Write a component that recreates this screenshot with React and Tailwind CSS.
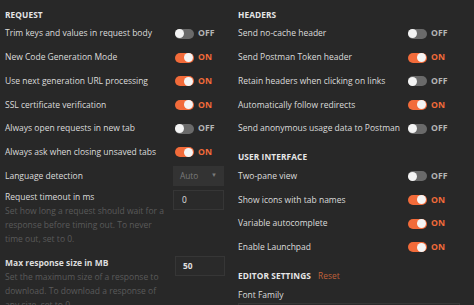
import React from "react";

const font = { fontFamily: '"Open Sans", "Noto Sans", sans-serif' };

function Toggle({ on }) {
  return (
    <div className="flex items-center gap-[4px]">
      <div
        className={
          "relative h-[10px] w-[19px] rounded-full " +
          (on ? "bg-[#f26b3a]" : "bg-[#6a6a6a]")
        }
      >
        <div
          className={
            "absolute top-[0.5px] h-[9px] w-[9px] rounded-full bg-[#f4f4f4] " +
            (on ? "right-[1px]" : "left-[0px]")
          }
        />
      </div>
      <span
        className={
          "text-[8.7px] font-bold leading-none " +
          (on ? "text-[#f26b3a]" : "text-[#b5b5b5]")
        }
      >
        {on ? "ON" : "OFF"}
      </span>
    </div>
  );
}

function Row({ label, on }) {
  return (
    <div className="flex h-[23.7px] items-center">
      <div className="w-[170px] shrink-0 whitespace-nowrap text-[8.5px] text-[#dcdcdc]">{label}</div>
      <Toggle on={on} />
    </div>
  );
}

function Header({ children, extra }) {
  return (
    <div className="flex h-[12px] items-center gap-[7px] text-[8.3px] font-bold tracking-[0.1px] text-[#e6e6e6]">
      {children}
      {extra}
    </div>
  );
}

export default function App() {
  return (
    <div
      className="flex h-[305px] w-[474px] overflow-hidden bg-[#282828] pl-[5px]"
      style={font}
    >
      {/* Left column */}
      <div className="flex w-[233px] shrink-0 flex-col">
        <div className="mt-[9px]">
          <Header>REQUEST</Header>
        </div>
        <div className="mt-[1px]">
          <Row label="Trim keys and values in request body" on={false} />
          <Row label="New Code Generation Mode" on />
          <Row label="Use next generation URL processing" on />
          <Row label="SSL certificate verification" on />
          <Row label="Always open requests in new tab" on={false} />
          <Row label="Always ask when closing unsaved tabs" on />
          <div className="flex h-[23.7px] items-center">
            <div className="w-[168px] shrink-0 text-[8.5px] text-[#dcdcdc]">Language detection</div>
            <div className="flex h-[20px] w-[51px] items-center justify-between bg-[#333333] px-[7px] text-[8.3px] text-[#7a7a7a]">
              <span>Auto</span>
              <span className="text-[6px]">▼</span>
            </div>
          </div>
          <div className="flex pt-[2px]">
            <div className="w-[168px] shrink-0">
              <div className="text-[8.5px] leading-[14px] text-[#dcdcdc]">Request timeout in ms</div>
              <div className="w-[163px] text-[8.5px] leading-[14px] text-[#5a5a5a]">
                Set how long a request should wait for a response before timing out. To never time out, set to 0.
              </div>
            </div>
            <div className="flex h-[20px] w-[51px] items-center border border-[#363636] bg-[#2a2a2a] px-[8px] text-[8.3px] text-[#e0e0e0]">
              0
            </div>
          </div>
          <div className="mt-[10px] flex">
            <div className="w-[170px] shrink-0">
              <div className="text-[8.5px] font-bold leading-[14px] text-[#dcdcdc]">Max response size in MB</div>
              <div className="w-[163px] text-[8.5px] leading-[14px] text-[#5a5a5a]">
                Set the maximum size of a response to download. To download a response of any size, set to 0.
              </div>
            </div>
            <div className="flex h-[20px] w-[50px] items-center border border-[#363636] bg-[#2a2a2a] px-[7px] text-[8.3px] font-bold text-[#e0e0e0]">
              50
            </div>
          </div>
        </div>
      </div>

      {/* Right column */}
      <div className="flex w-[236px] shrink-0 flex-col">
        <div className="mt-[9px]">
          <Header>HEADERS</Header>
        </div>
        <div className="mt-[1px]">
          <Row label="Send no-cache header" on={false} />
          <Row label="Send Postman Token header" on />
          <Row label="Retain headers when clicking on links" on={false} />
          <Row label="Automatically follow redirects" on />
          <Row label="Send anonymous usage data to Postman" on={false} />
        </div>
        <div className="mt-[11px]">
          <Header>USER INTERFACE</Header>
        </div>
        <div className="mt-[1px]">
          <Row label="Two-pane view" on={false} />
          <Row label="Show icons with tab names" on />
          <Row label="Variable autocomplete" on />
          <Row label="Enable Launchpad" on />
        </div>
        <div className="mt-[11px]">
          <Header extra={<span className="font-normal text-[#c0623a]">Reset</span>}>
            EDITOR SETTINGS
          </Header>
        </div>
        <div className="mt-[7px] h-[12px] shrink-0 text-[8.5px] leading-[12px] text-[#dcdcdc]">Font Family</div>
        <div className="mt-[2px] h-[20px] w-[222px] shrink-0 border border-[#363636] bg-[#2a2a2a]" />
      </div>
    </div>
  );
}
